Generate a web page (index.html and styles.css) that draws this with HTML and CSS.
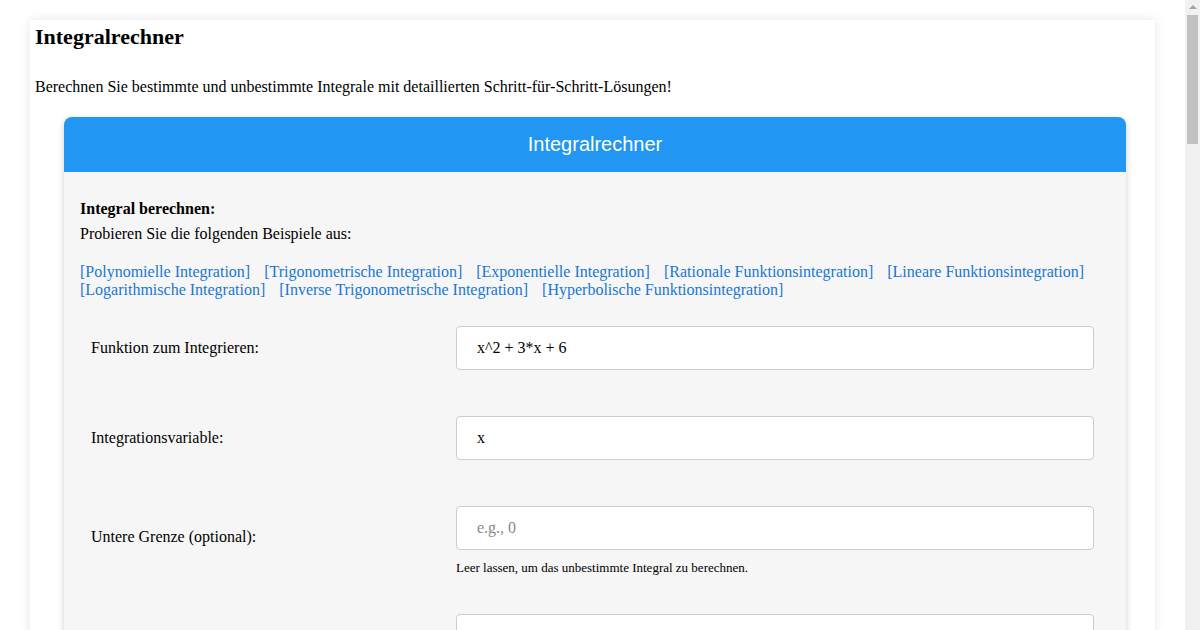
FILE: index.html
```html
<!DOCTYPE html>
<html lang="de">
<head>
    <meta charset="UTF-8">
    <meta name="viewport" content="width=device-width, initial-scale=1.0">
    <title>Integralrechner</title>
    <link rel="stylesheet" href="styles.css">
</head>
<body>
    <div id="page">
        <h1>Integralrechner</h1>
        <p class="intro">Berechnen Sie bestimmte und unbestimmte Integrale mit detaillierten Schritt-für-Schritt-Lösungen!</p>

        <div id="calculator">
            <div class="calc-header">Integralrechner</div>
            <div class="calc-body">
                <div class="calc-title">Integral berechnen:</div>
                <div class="calc-subtitle">Probieren Sie die folgenden Beispiele aus:</div>

                <div class="examples">
                    <a href="#">[Polynomielle Integration]</a>
                    <a href="#">[Trigonometrische Integration]</a>
                    <a href="#">[Exponentielle Integration]</a>
                    <a href="#">[Rationale Funktionsintegration]</a>
                    <a href="#">[Lineare Funktionsintegration]</a>
                    <a href="#">[Logarithmische Integration]</a>
                    <a href="#">[Inverse Trigonometrische Integration]</a>
                    <a href="#">[Hyperbolische Funktionsintegration]</a>
                </div>

                <div class="form-row">
                    <label for="func">Funktion zum Integrieren:</label>
                    <div class="field">
                        <input type="text" id="func" value="x^2 + 3*x + 6">
                    </div>
                </div>
                <div class="form-row">
                    <label for="var">Integrationsvariable:</label>
                    <div class="field">
                        <input type="text" id="var" value="x">
                    </div>
                </div>
                <div class="form-row">
                    <label for="lower">Untere Grenze (optional):</label>
                    <div class="field">
                        <input type="text" id="lower" placeholder="e.g., 0">
                        <div class="hint">Leer lassen, um das unbestimmte Integral zu berechnen.</div>
                    </div>
                </div>
                <div class="form-row">
                    <label for="upper">Obere Grenze (optional):</label>
                    <div class="field">
                        <input type="text" id="upper" placeholder="e.g., 1">
                        <div class="hint">Leer lassen, um das unbestimmte Integral zu berechnen.</div>
                    </div>
                </div>
                <div class="actions">
                    <button class="calc-button">Berechnen</button>
                </div>
            </div>
        </div>
    </div>

    <!-- Scrollleiste wie im Browserfenster -->
    <div class="scrollbar">
        <div class="scroll-arrow"></div>
        <div class="scroll-thumb"></div>
    </div>
</body>
</html>
```

FILE: styles.css
```css
body {
    font-family: "Liberation Serif", "Times New Roman", serif;
    margin: 0;
    background-color: #fff;
    color: #000;
}
#page {
    width: 1125px;
    margin: 20px auto 0 30px;
    padding: 4px 5px 40px 5px;
    box-sizing: border-box;
    background: #fff;
    box-shadow: 0 0 10px rgba(0, 0, 0, 0.1);
}
h1 {
    font-size: 22px;
    margin: 0 0 28px 0;
}
.intro {
    font-size: 16px;
    margin: 0 0 21px 0;
}
#calculator {
    width: 1062px;
    margin-left: 29px;
    border-radius: 8px;
    box-shadow: 0 2px 6px rgba(0, 0, 0, 0.2);
    background: #f6f6f6;
}
.calc-header {
    background-color: #2196F3;
    color: #fff;
    font-family: "Liberation Sans", Arial, sans-serif;
    font-size: 20px;
    text-align: center;
    height: 55px;
    line-height: 55px;
    border-radius: 8px 8px 0 0;
}
.calc-body {
    padding: 27px 16px 30px 16px;
}
.calc-title {
    font-weight: bold;
    font-size: 16px;
    line-height: 20px;
    margin-bottom: 5px;
}
.calc-subtitle {
    font-size: 16px;
    line-height: 20px;
    margin-bottom: 19px;
}
.examples {
    line-height: 18px;
    margin-bottom: 27px;
}
.examples a {
    color: #1976d2;
    text-decoration: none;
    margin-right: 10px;
}
.form-row {
    display: grid;
    grid-template-columns: 366px 638px;
    align-items: center;
    padding: 0 10px;
    margin-bottom: 46px;
}
.form-row label {
    font-size: 16px;
    padding-left: 1px;
}
.form-row input {
    width: 100%;
    height: 44px;
    box-sizing: border-box;
    border: 1px solid #ccc;
    border-radius: 4px;
    padding: 0 20px;
    font-family: "Liberation Serif", "Times New Roman", serif;
    font-size: 16px;
    background: #fff;
    color: #000;
}
.form-row input::placeholder {
    color: #888;
}
.hint {
    font-size: 13px;
    line-height: 16px;
    margin-top: 10px;
    margin-bottom: -8px;
}
.actions {
    text-align: center;
}
.calc-button {
    background-color: #2196F3;
    color: #fff;
    border: none;
    padding: 12px 30px;
    font-size: 16px;
    border-radius: 4px;
}
.scrollbar {
    position: fixed;
    top: 0;
    right: 0;
    width: 15px;
    height: 100%;
    background: #f1f1f1;
}
.scroll-arrow {
    width: 0;
    height: 0;
    margin: 5px auto 0 auto;
    border-left: 4px solid transparent;
    border-right: 4px solid transparent;
    border-bottom: 4px solid #a3a3a3;
}
.scroll-thumb {
    width: 11px;
    height: 129px;
    margin: 6px auto 0 auto;
    background: #c1c1c1;
}
```
